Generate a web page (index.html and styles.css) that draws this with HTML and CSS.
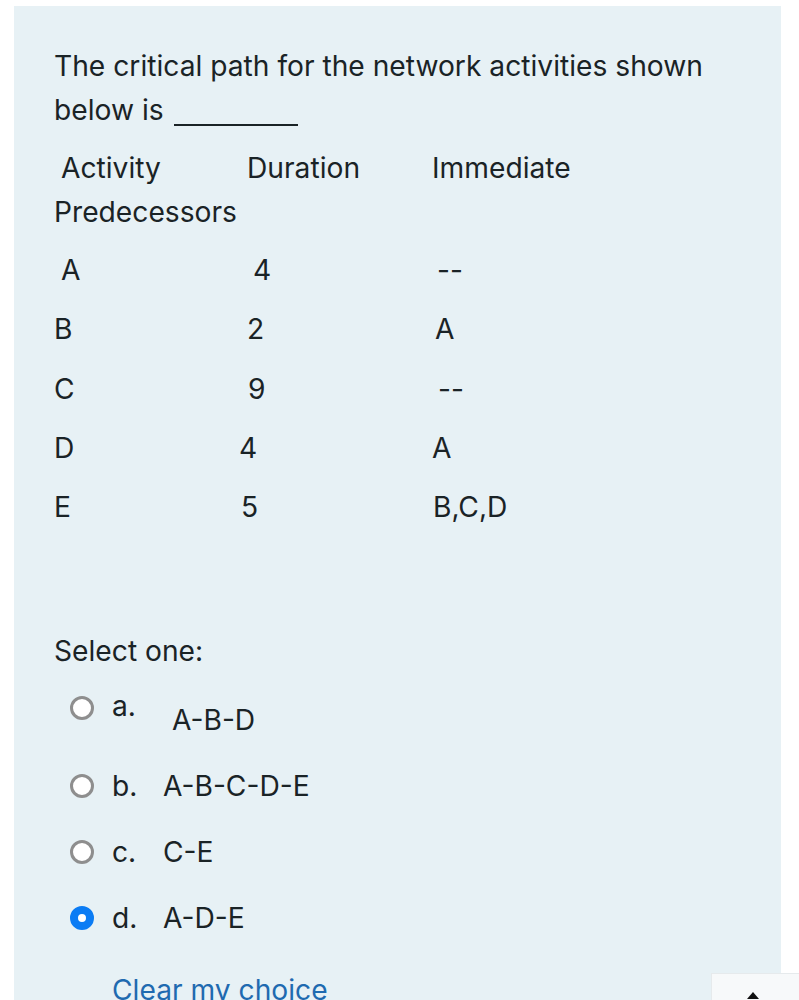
FILE: index.html
```html
<!DOCTYPE html>
<html lang="en">
<head>
<meta charset="utf-8">
<title>Question</title>
<link rel="stylesheet" href="styles.css">
</head>
<body>
<div class="formulation">
  <p class="qtext">The critical path for the network activities shown below is <span class="blank"></span></p>
  <div class="thead">
    <span class="c1 i7">Activity</span>
    <span class="c2">Duration</span>
    <span class="c3">Immediate</span>
  </div>
  <div class="thead2">Predecessors</div>
  <div class="trow"><span class="c1 i7">A</span><span class="c2 i6">4</span><span class="c3 i5">--</span></div>
  <div class="trow"><span class="c1">B</span><span class="c2">2</span><span class="c3 i3">A</span></div>
  <div class="trow"><span class="c1">C</span><span class="c2 i1">9</span><span class="c3 i6">--</span></div>
  <div class="trow"><span class="c1">D</span><span class="c2 n8">4</span><span class="c3">A</span></div>
  <div class="trow"><span class="c1">E</span><span class="c2 n6">5</span><span class="c3 i1">B,C,D</span></div>

  <div class="prompt">Select one:</div>
  <div class="answers">
    <div class="opt opt-first">
      <span class="radio"></span><span class="lbl">a.</span><span class="ans ans-low">A-B-D</span>
    </div>
    <div class="opt">
      <span class="radio"></span><span class="lbl">b.</span><span class="ans">A-B-C-D-E</span>
    </div>
    <div class="opt">
      <span class="radio"></span><span class="lbl">c.</span><span class="ans">C-E</span>
    </div>
    <div class="opt">
      <span class="radio checked"></span><span class="lbl">d.</span><span class="ans">A-D-E</span>
    </div>
    <a class="clear" href="#">Clear my choice</a>
  </div>
</div>
<div class="totop">
  <svg width="20" height="14" viewBox="0 0 20 14"><path d="M10 2 L4 9 H16 Z" fill="#111"/></svg>
</div>
</body>
</html>
```
FILE: styles.css
```css
html, body {
  margin: 0;
  padding: 0;
  background: #ffffff;
}
body {
  font-family: Inter, "Noto Sans", "Liberation Sans", sans-serif;
  font-size: 28.2px;
  color: #1a2326;
  height: 1000px;
  overflow: hidden;
  position: relative;
}
.formulation {
  margin: 6px 0 0 14px;
  width: 767px;
  height: 1100px;
  box-sizing: border-box;
  background: #e7f1f5;
  padding: 38px 0 0 40px;
}
.qtext {
  margin: 0;
  line-height: 44px;
  width: 690px;
}
.blank {
  display: inline-block;
  width: 124px;
  border-bottom: 2px solid #1a2326;
  height: 30px;
  vertical-align: -6px;
  margin-left: 2px;
}
.thead {
  margin-top: 14px;
  display: grid;
  grid-template-columns: 193px 185px 1fr;
  line-height: 44px;
}
.thead2 {
  line-height: 44px;
}
.trow {
  display: grid;
  grid-template-columns: 193px 185px 1fr;
  height: 59.3px;
  line-height: 59.3px;
}
.thead2 + .trow { margin-top: 7px; }
.i1 { padding-left: 1px; }
.i3 { padding-left: 3px; }
.i5 { padding-left: 5px; }
.i6 { padding-left: 6px; }
.i7 { padding-left: 7px; }
.n6 { margin-left: -6px; }
.n8 { margin-left: -8px; }
.prompt {
  margin-top: 92px;
  line-height: 44px;
}
.answers {
  margin-top: 2px;
  padding-left: 16px;
}
.opt {
  display: flex;
  align-items: center;
  height: 66px;
}
.opt-first {
  margin-bottom: 12px;
}
.radio {
  width: 24px;
  height: 24px;
  box-sizing: border-box;
  border: 3px solid #8e8e8e;
  border-radius: 50%;
  background: #fff;
  flex: none;
  margin-right: 18px;
}
.radio.checked {
  border: 8px solid #0b7cf4;
  background: #fff;
}
.lbl {
  min-width: 51px;
}
.opt-first .lbl {
  min-width: 60px;
  margin-top: -4px;
}
.ans-low {
  margin-top: 24px;
}
.clear {
  display: block;
  margin: 17px 0 0 42px;
  color: #1f6ab0;
  text-decoration: none;
  line-height: 44px;
}
.totop {
  position: absolute;
  left: 711px;
  top: 973px;
  width: 100px;
  height: 60px;
  background: #f7f9fa;
  border-left: 1px solid #e6eaec;
  border-top: 1px solid #e6eaec;
  display: flex;
  justify-content: center;
  padding-top: 16px;
  box-sizing: border-box;
  padding-right: 18px;
}
```
